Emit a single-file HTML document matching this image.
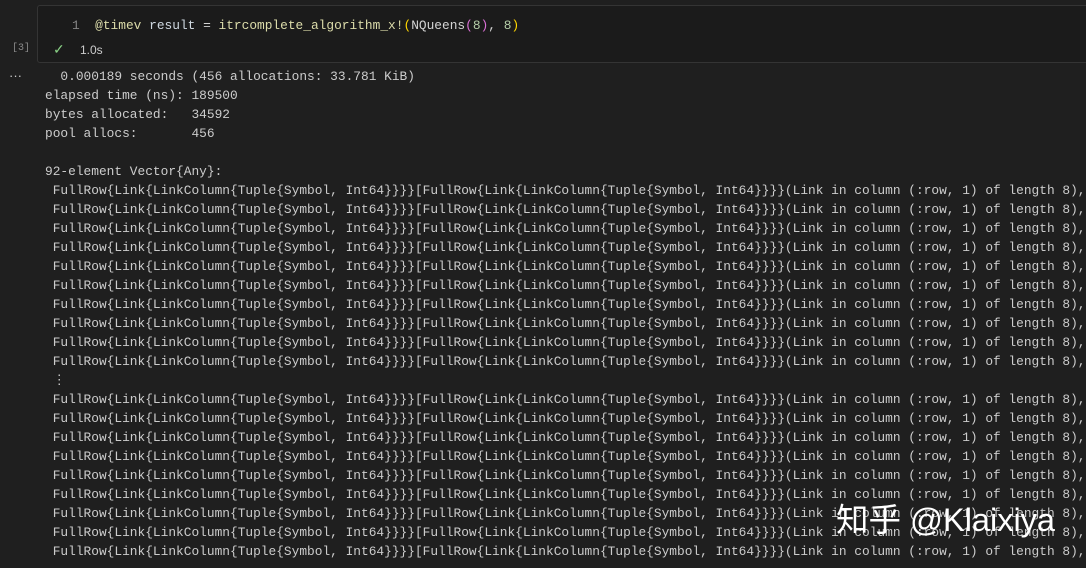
<html><head><style>
body{margin:0;width:1086px;height:568px;background:#1f1f1f;overflow:hidden;position:relative;font-family:"Liberation Mono",monospace;color:#cccccc}
.box{position:absolute;left:37px;top:5px;width:1060px;height:56px;border:1px solid #343434;border-radius:3px;background:#1b1b1b}
.code{position:absolute;left:72px;top:16px;font-size:12.85px;line-height:19px;white-space:pre;color:#d4d4d4}
.out{position:absolute;left:45px;top:67px;font-size:12.85px;line-height:19px;white-space:pre;color:#cccccc}
.s{position:absolute;font-family:"Liberation Sans",sans-serif;font-size:12px;color:#aaa}
.wm{position:absolute;left:836px;top:494px;font-family:"Liberation Sans","Noto Sans CJK SC",sans-serif;font-size:32.5px;color:#fff;white-space:nowrap}
</style></head><body>
<div class="box"></div>
<div class="code"><span style="color:#858585">1</span>  <span style="color:#dcdcaa">@timev</span> <span style="color:#cfd8e0">result</span> = <span style="color:#dcdcaa">itrcomplete_algorithm_x!</span><span style="color:#ffd700">(</span>NQueens<span style="color:#da70d6">(</span><span style="color:#b5cea8">8</span><span style="color:#da70d6">)</span>, <span style="color:#b5cea8">8</span><span style="color:#ffd700">)</span></div>
<div class="s" style="left:12px;top:43px;font-family:'Liberation Mono',monospace;font-size:10px;color:#888">[3]</div>
<div class="s" style="left:53px;top:41px;color:#89d185;font-size:14px">✓</div>
<div class="s" style="left:80px;top:43px;color:#ccc">1.0s</div>
<div class="s" style="left:9px;top:68px;color:#ccc;font-size:13px">···</div>
<div class="out">  0.000189 seconds (456 allocations: 33.781 KiB)
elapsed time (ns): 189500
bytes allocated:   34592
pool allocs:       456

92-element Vector{Any}:
 FullRow{Link{LinkColumn{Tuple{Symbol, Int64}}}}[FullRow{Link{LinkColumn{Tuple{Symbol, Int64}}}}(Link in column (:row, 1) of length 8),
 FullRow{Link{LinkColumn{Tuple{Symbol, Int64}}}}[FullRow{Link{LinkColumn{Tuple{Symbol, Int64}}}}(Link in column (:row, 1) of length 8),
 FullRow{Link{LinkColumn{Tuple{Symbol, Int64}}}}[FullRow{Link{LinkColumn{Tuple{Symbol, Int64}}}}(Link in column (:row, 1) of length 8),
 FullRow{Link{LinkColumn{Tuple{Symbol, Int64}}}}[FullRow{Link{LinkColumn{Tuple{Symbol, Int64}}}}(Link in column (:row, 1) of length 8),
 FullRow{Link{LinkColumn{Tuple{Symbol, Int64}}}}[FullRow{Link{LinkColumn{Tuple{Symbol, Int64}}}}(Link in column (:row, 1) of length 8),
 FullRow{Link{LinkColumn{Tuple{Symbol, Int64}}}}[FullRow{Link{LinkColumn{Tuple{Symbol, Int64}}}}(Link in column (:row, 1) of length 8),
 FullRow{Link{LinkColumn{Tuple{Symbol, Int64}}}}[FullRow{Link{LinkColumn{Tuple{Symbol, Int64}}}}(Link in column (:row, 1) of length 8),
 FullRow{Link{LinkColumn{Tuple{Symbol, Int64}}}}[FullRow{Link{LinkColumn{Tuple{Symbol, Int64}}}}(Link in column (:row, 1) of length 8),
 FullRow{Link{LinkColumn{Tuple{Symbol, Int64}}}}[FullRow{Link{LinkColumn{Tuple{Symbol, Int64}}}}(Link in column (:row, 1) of length 8),
 FullRow{Link{LinkColumn{Tuple{Symbol, Int64}}}}[FullRow{Link{LinkColumn{Tuple{Symbol, Int64}}}}(Link in column (:row, 1) of length 8),
 ⋮
 FullRow{Link{LinkColumn{Tuple{Symbol, Int64}}}}[FullRow{Link{LinkColumn{Tuple{Symbol, Int64}}}}(Link in column (:row, 1) of length 8),
 FullRow{Link{LinkColumn{Tuple{Symbol, Int64}}}}[FullRow{Link{LinkColumn{Tuple{Symbol, Int64}}}}(Link in column (:row, 1) of length 8),
 FullRow{Link{LinkColumn{Tuple{Symbol, Int64}}}}[FullRow{Link{LinkColumn{Tuple{Symbol, Int64}}}}(Link in column (:row, 1) of length 8),
 FullRow{Link{LinkColumn{Tuple{Symbol, Int64}}}}[FullRow{Link{LinkColumn{Tuple{Symbol, Int64}}}}(Link in column (:row, 1) of length 8),
 FullRow{Link{LinkColumn{Tuple{Symbol, Int64}}}}[FullRow{Link{LinkColumn{Tuple{Symbol, Int64}}}}(Link in column (:row, 1) of length 8),
 FullRow{Link{LinkColumn{Tuple{Symbol, Int64}}}}[FullRow{Link{LinkColumn{Tuple{Symbol, Int64}}}}(Link in column (:row, 1) of length 8),
 FullRow{Link{LinkColumn{Tuple{Symbol, Int64}}}}[FullRow{Link{LinkColumn{Tuple{Symbol, Int64}}}}(Link in column (:row, 1) of length 8),
 FullRow{Link{LinkColumn{Tuple{Symbol, Int64}}}}[FullRow{Link{LinkColumn{Tuple{Symbol, Int64}}}}(Link in column (:row, 1) of length 8),
 FullRow{Link{LinkColumn{Tuple{Symbol, Int64}}}}[FullRow{Link{LinkColumn{Tuple{Symbol, Int64}}}}(Link in column (:row, 1) of length 8),</div>
<div class="wm">知乎 @Klaixiya</div>
</body></html>
